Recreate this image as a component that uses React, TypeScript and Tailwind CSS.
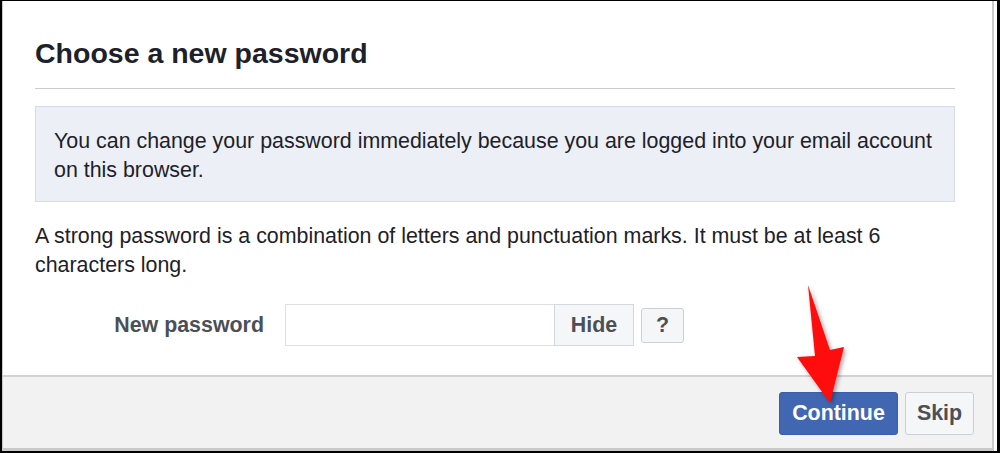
import React from "react";

const font = "font-['Liberation_Sans',Arial,Helvetica,sans-serif]";

export default function App() {
  return (
    <div className={`relative h-[453px] w-[1000px] overflow-hidden bg-black pb-[2px] pl-[2px] pr-[3px] pt-[1px] ${font}`}>
      <div className="h-full bg-white pr-[3px]">
        <div className="flex h-full flex-col border-b-[3px] border-l border-r-2 border-[#cacaca]">
          {/* body */}
          <div className="flex-1 pl-[32px] pr-[37px] pt-[34px]">
            <div className="border-b border-[#cccccc] pb-[17px]">
              <h1 className="text-[28.5px] font-bold leading-[36px] text-[#1d2129]">Choose a new password</h1>
            </div>

            <div className="mt-[17px] h-[96px] border border-[#d5dbe8] bg-[#eceff5] px-[18px] pt-[20px] text-[21.4px] leading-[28.5px] text-[#1d2129]">
              You can change your password immediately because you are logged into your email account on this browser.
            </div>

            <p className="mt-[20px] text-[21.4px] leading-[28.5px] text-[#1d2129]">
              A strong password is a combination of letters and punctuation marks. It must be at least 6 characters long.
            </p>

            <div className="mt-[25px] flex items-center">
              <label className="w-[230px] pr-px text-right text-[21.4px] font-bold leading-[28px] text-[#4b4f56]">New password</label>
              <input
                type="password"
                className="ml-[20px] h-[42px] w-[270px] border border-[#dddfe2] bg-white px-2 outline-none"
              />
              <button className="-ml-px h-[42px] w-[80px] border border-[#d4d7dc] bg-[#f5f6f7] text-[21.4px] font-bold text-[#4b4f56]">
                Hide
              </button>
              <button className="ml-[7px] h-[35px] w-[43px] rounded-[3px] border border-[#ccd0d5] bg-[#f5f6f7] text-[21.4px] font-bold text-[#4b4f56]">
                ?
              </button>
            </div>
          </div>

          {/* footer */}
          <div className="flex h-[73px] items-start justify-end gap-[7px] border-t-2 border-[#d2d2d2] bg-[#f2f2f2] pr-[18px] pt-[15px]">
            <button className="h-[43px] w-[119px] rounded-[3px] border border-[#3b5ea6] bg-[#4267b2] text-[21.4px] font-bold text-white">
              Continue
            </button>
            <button className="h-[43px] w-[69px] rounded-[3px] border border-[#ccd0d5] bg-[#f5f6f7] text-[21.4px] font-bold text-[#4b4f56]">
              Skip
            </button>
          </div>
        </div>
      </div>

      {/* red annotation arrow */}
      <svg className="pointer-events-none absolute left-0 top-0" width="1000" height="453" viewBox="0 0 1000 453">
        <defs>
          <filter id="shadow" x="-50%" y="-50%" width="200%" height="200%">
            <feDropShadow dx="2" dy="2" stdDeviation="2" floodColor="#000" floodOpacity="0.35" />
          </filter>
        </defs>
        <polygon
          points="808,285 830,350 844,347 830,403 797,357 815,356"
          fill="#ff0a0a"
          filter="url(#shadow)"
        />
      </svg>
    </div>
  );
}
